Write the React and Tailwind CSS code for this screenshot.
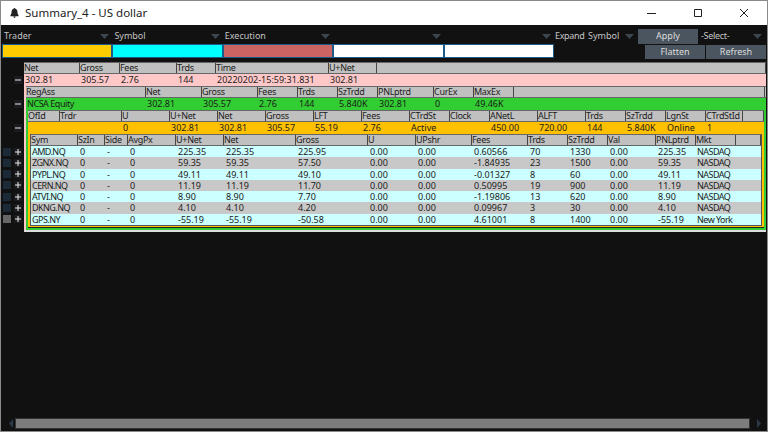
import React from "react";

const font = { fontFamily: "'Noto Sans', sans-serif" };

const summaryCols = [
  ["Net", 56, "302.81"],
  ["Gross", 40, "305.57"],
  ["Fees", 57, "2.76"],
  ["Trds", 39, "144"],
  ["Time", 113, "20220202-15:59:31.831"],
  ["U+Net", 48, "302.81"],
];

const assetCols = [
  ["RegAss", 120, "NCSA Equity", "tracking-[-0.45px]"],
  ["Net", 56, "302.81"],
  ["Gross", 56, "305.57"],
  ["Fees", 40, "2.76"],
  ["Trds", 40, "144"],
  ["SzTrdd", 40, "5.840K"],
  ["PNLptrd", 56, "302.81"],
  ["CurEx", 40, "0"],
  ["MaxEx", 40, "49.46K"],
];

const traderCols = [
  ["OfId", 32, ""],
  ["Trdr", 62, ""],
  ["U", 48, "0"],
  ["U+Net", 48, "302.81"],
  ["Net", 48, "302.81"],
  ["Gross", 48, "305.57"],
  ["LFT", 48, "55.19"],
  ["Fees", 48, "2.76"],
  ["CTrdSt", 40, "Active"],
  ["Clock", 40, ""],
  ["ANetL", 48, "450.00"],
  ["ALFT", 48, "720.00"],
  ["Trds", 40, "144"],
  ["SzTrdd", 40, "5.840K"],
  ["LgnSt", 40, "Online"],
  ["CTrdStId", 37, "1"],
];

const symCols = [
  ["Sym", 47],
  ["SzIn", 27],
  ["Side", 23],
  ["AvgPx", 48],
  ["U+Net", 48],
  ["Net", 72],
  ["Gross", 72],
  ["U", 48],
  ["UPshr", 56],
  ["Fees", 56],
  ["Trds", 40],
  ["SzTrdd", 40],
  ["Val", 48],
  ["PNLptrd", 40],
  ["Mkt", 40],
];

const symRows = [
  ["AMD.NQ", "0", "-", "0", "225.35", "225.35", "225.95", "0.00", "0.00", "0.60566", "70", "1330", "0.00", "225.35", "NASDAQ"],
  ["ZGNX.NQ", "0", "-", "0", "59.35", "59.35", "57.50", "0.00", "0.00", "-1.84935", "23", "1500", "0.00", "59.35", "NASDAQ"],
  ["PYPL.NQ", "0", "-", "0", "49.11", "49.11", "49.10", "0.00", "0.00", "-0.01327", "8", "60", "0.00", "49.11", "NASDAQ"],
  ["CERN.NQ", "0", "-", "0", "11.19", "11.19", "11.70", "0.00", "0.00", "0.50995", "19", "900", "0.00", "11.19", "NASDAQ"],
  ["ATVI.NQ", "0", "-", "0", "8.90", "8.90", "7.70", "0.00", "0.00", "-1.19806", "13", "620", "0.00", "8.90", "NASDAQ"],
  ["DKNG.NQ", "0", "-", "0", "4.10", "4.10", "4.20", "0.00", "0.00", "0.09967", "3", "30", "0.00", "4.10", "NASDAQ"],
  ["GPS.NY", "0", "-", "0", "-55.19", "-55.19", "-50.58", "0.00", "0.00", "4.61001", "8", "1400", "0.00", "-55.19", "New York"],
];

const filters = [
  ["Trader", "bg-[#ffcc00]"],
  ["Symbol", "bg-[#00ffff]"],
  ["Execution", "bg-[#cd6464]"],
  ["", "bg-white"],
  ["", "bg-white"],
];

const Caret = () => (
  <svg width="9" height="5" viewBox="0 0 9 5" className="shrink-0">
    <path d="M0 0h9L4.500 5z" fill="#3c4650" />
  </svg>
);

const HeaderRow = ({ cols }) => (
  <div className="flex h-[12px] bg-[#c0c0c0] border-t border-b border-[#666] text-[#1c1c1c] leading-[10.5px] tracking-[-0.3px]">
    {cols.map((c) => (
      <div key={c[0]} style={{ width: c[1] }} className="shrink-0 border-r border-[#444] whitespace-nowrap">
        {c[0]}
      </div>
    ))}
  </div>
);

const ValueRow = ({ cols, bg }) => (
  <div className={`flex h-[12px] ${bg} text-[#1c1c1c] leading-[12px]`}>
    {cols.map((c) => (
      <div key={c[0]} style={{ width: c[1] }} className={`shrink-0 pl-[1px] whitespace-nowrap ${c[3] || ""}`}>
        {c[2]}
      </div>
    ))}
  </div>
);

const SymRow = ({ row, odd }) => (
  <div className={`flex h-[11.25px] leading-[11px] text-[#1c1c1c] ${odd ? "bg-[#c8c8c8]" : "bg-[#ccffff]"}`}>
    {symCols.map((c, i) => (
      <div key={c[0]} style={{ width: c[1] }} className={`shrink-0 whitespace-nowrap ${i === 0 || i === 14 ? "pl-[1px] tracking-[-0.55px]" : "pl-[2px]"}`}>
        {row[i]}
      </div>
    ))}
  </div>
);

const PmButton = ({ sign }) => (
  <div className="w-[8px] h-[8px] bg-[#1c1c20] flex items-center justify-center">
    <svg width="6" height="6" viewBox="0 0 6 6">
      <path d={sign === "+" ? "M0 3h6M3 0v6" : "M0 3h6"} stroke="#e8e8e8" strokeWidth="1" />
    </svg>
  </div>
);

const GutterRow = ({ sign, h, square }) => (
  <div style={{ height: h }} className="flex items-center pl-[2px] gap-[3px]">
    <div className={`w-[8px] h-[8px] ${square || ""}`} />
    <PmButton sign={sign} />
  </div>
);

export default function App() {
  return (
    <div style={font} className="w-[768px] h-[432px] overflow-hidden flex flex-col bg-[#111] border border-[#8a8a8a] text-[9px]">
      <div className="h-[24px] shrink-0 bg-white flex items-center text-[11.5px] text-[#222]">
        <svg width="9" height="10" viewBox="0 0 10 11" className="ml-[9px] mr-[6px]">
          <path d="M5 0c.6 0 1 .4 1 .9C7.600 1.400 8.300 2.700 8.300 4.500c0 2 .6 3 1.300 3.700V9H.4v-.8C1.100 7.500 1.700 6.500 1.700 4.500 1.700 2.700 2.400 1.400 4 .9 4 .4 4.400 0 5 0zM3.800 9.500h2.400C6.100 10.400 5.600 11 5 11s-1.100-.6-1.200-1.500z" fill="#222" />
        </svg>
        <span>Summary_4 - US dollar</span>
        <div className="ml-auto flex items-center">
          <svg width="46" height="24" viewBox="0 0 46 24"><path d="M17 12.500h9" stroke="#222" /></svg>
          <svg width="46" height="24" viewBox="0 0 46 24"><path d="M18.500 8.500h7v7h-7z" fill="none" stroke="#222" /></svg>
          <svg width="45" height="24" viewBox="0 0 45 24"><path d="M18 8l8 8M26 8l-8 8" stroke="#222" /></svg>
        </div>
      </div>

      <div className="h-[37px] shrink-0 flex pl-px pt-[3px] text-[#c4c4c4]">
        <div className="flex">
          {filters.map((f, i) => (
            <div key={i} className="w-[110.4px] flex flex-col">
              <div className="h-[16px] flex items-center justify-between pl-[2px] pr-[3px]">
                <span>{f[0]}</span>
                <Caret />
              </div>
              <div className={`h-[14px] border border-[#1c5a8a] ${f[1]}`} />
            </div>
          ))}
        </div>
        <div className="flex flex-col flex-1">
          <div className="flex h-[16px] items-center">
            <span className="ml-[1px] w-[30px] tracking-[-0.3px]">Expand</span>
            <div className="w-[53px] h-[15px] flex items-center justify-between pl-[3px] pr-[4px]">
              <span>Symbol</span>
              <Caret />
            </div>
            <div className="w-[60px] h-[15px] bg-[#4a5560] flex items-center justify-center text-[#ddd]">Apply</div>
            <div className="ml-[3px] w-[64px] flex items-center justify-between pr-[3px]">
              <span className="tracking-[-0.3px]">-Select-</span>
              <Caret />
            </div>
          </div>
          <div className="flex justify-end gap-px pr-px mt-[1px]">
            <div className="w-[60px] h-[14px] bg-[#4a5560] flex items-center justify-center text-[#ddd]">Flatten</div>
            <div className="w-[60px] h-[14px] bg-[#4a5560] flex items-center justify-center text-[#ddd]">Refresh</div>
          </div>
        </div>
      </div>

      <div className="flex">
        <div className="w-[23px] shrink-0 pt-[12px]">
          <GutterRow sign="-" h={12} />
          <div className="h-[12px]" />
          <GutterRow sign="-" h={12} />
          <div className="h-[12px]" />
          <GutterRow sign="-" h={12} />
          <div className="h-[12px]" />
          {symRows.map((r, i) => (
            <GutterRow key={r[0]} sign="+" h={11.25} square={i === 6 ? "bg-[#666]" : "bg-[#1c2a38]"} />
          ))}
        </div>
        <div className="w-[742px] bg-[#ffc8c8] border-b-2 border-[#ddd]">
          <HeaderRow cols={[...summaryCols, ["", 389]]} />
          <ValueRow cols={summaryCols} bg="bg-[#ffc8c8]" />
          <div className="ml-[2px] bg-[#32cd32] pb-[2px]">
            <HeaderRow cols={[...assetCols, ["", 251]]} />
            <ValueRow cols={assetCols} bg="bg-[#32cd32]" />
            <div className="mx-[2px] bg-[#ffc000] pb-[1px] border-b border-[#222]">
              <HeaderRow cols={[...traderCols, ["", 21]]} />
              <ValueRow cols={traderCols} bg="bg-[#ffc000]" />
              <div className="mx-[2px] border-x border-b border-[#555]">
                <HeaderRow cols={[...symCols, ["", 25]]} />
                {symRows.map((r, i) => (
                  <SymRow key={r[0]} row={r} odd={i % 2 === 1} />
                ))}
              </div>
            </div>
          </div>
        </div>
      </div>

      <div className="flex-1" />
      <div className="h-[11px] mb-[2px] flex items-center pl-[6px] pr-[4px] shrink-0">
        <svg width="8" height="9" viewBox="0 0 8 9"><path d="M6 0v9L2 4.500z" fill="#2a3a4a" /></svg>
        <div className="flex-1 h-[11px] bg-[#7c7c7c] border border-[#333]" />
        <svg width="8" height="9" viewBox="0 0 8 9" className="ml-[5px]"><path d="M2 0v9l4-4.500z" fill="#2a3a4a" /></svg>
      </div>
    </div>
  );
}
